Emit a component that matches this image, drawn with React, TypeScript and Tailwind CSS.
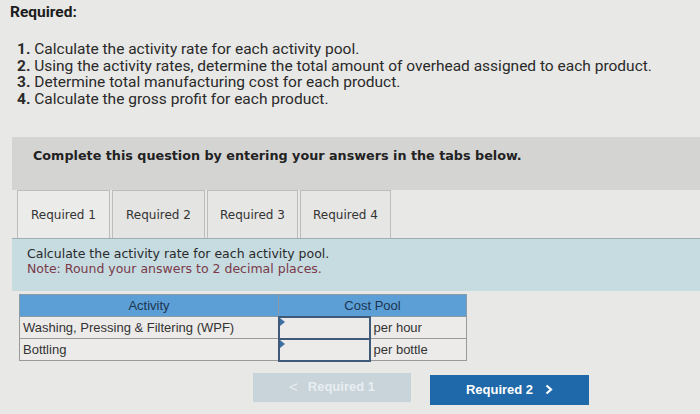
import React from "react";

const tabs = ["Required 1", "Required 2", "Required 3", "Required 4"];

const rows = [
  { activity: "Washing, Pressing & Filtering (WPF)", unit: "per hour" },
  { activity: "Bottling", unit: "per bottle" },
];

export default function App() {
  return (
    <div className="w-[700px] h-[414px] overflow-hidden bg-[#e8e8e6] text-[#222]">
      {/* Required list */}
      <div className="pl-[10px] pt-[2px] font-['Roboto',sans-serif]">
        <h2 className="text-[15.5px] font-bold leading-[20px] text-[#1c1c1c]">Required:</h2>
        <ol className="mt-[19px] pl-[7px] text-[15.5px] leading-[16.5px] text-[#2a2a2a]">
          <li><b>1.</b> Calculate the activity rate for each activity pool.</li>
          <li><b>2.</b> Using the activity rates, determine the total amount of overhead assigned to each product.</li>
          <li><b>3.</b> Determine total manufacturing cost for each product.</li>
          <li><b>4.</b> Calculate the gross profit for each product.</li>
        </ol>
      </div>

      <div className="ml-[12px] mt-[30px] font-['DejaVu_Sans',sans-serif]">
        {/* Instruction band */}
        <div className="h-[53px] bg-[#d4d4d2] pl-[21px] pt-[11px]">
          <p className="text-[12.75px] font-bold leading-[16px] text-[#222]">
            Complete this question by entering your answers in the tabs below.
          </p>
        </div>

        {/* Tabs */}
        <div className="flex gap-[2px] pl-[5px]">
          {tabs.map((t, i) => (
            <div
              key={t}
              className={`h-[48px] border border-[#bdbdbb] border-b-0 flex items-center justify-center text-[12px] text-[#333] ${
                i === 0 ? "w-[93px] bg-[#ebebe9]" : i === 1 ? "w-[93px] bg-[#e4e4e2]" : "w-[91px] bg-[#e6e6e4]"
              }`}
            >
              {t}
            </div>
          ))}
        </div>

        {/* Prompt panel */}
        <div className="h-[53px] bg-[#c6dce1] border-t border-[#9eaeb2] pl-[15px] pt-[7px] text-[12.5px] leading-[15px]">
          <p className="text-[#2a2a2a]">Calculate the activity rate for each activity pool.</p>
          <p className="text-[#7a3a48]">Note: Round your answers to 2 decimal places.</p>
        </div>
      </div>

      {/* Table */}
      <table className="ml-[19px] mt-[3px] border-collapse font-['Liberation_Sans',sans-serif] text-[13px]">
        <thead>
          <tr className="bg-[#5b9fd6] text-[#1d3550]">
            <th className="w-[259px] h-[22px] border border-[#8a9aa6] font-normal">Activity</th>
            <th colSpan={2} className="h-[22px] border border-[#8a9aa6] font-normal">Cost Pool</th>
          </tr>
        </thead>
        <tbody>
          {rows.map((r) => (
            <tr key={r.unit} className="bg-[#ecebe9]">
              <td className="h-[22px] border border-[#9a9a9a] pl-[3px] text-[#333]">{r.activity}</td>
              <td className="w-[91px] h-[22px] border-2 border-[#3f5a78] relative p-0">
                <span className="absolute left-0 top-0 w-0 h-0 border-t-[4px] border-b-[4px] border-l-[5px] border-t-transparent border-b-transparent border-l-[#3d6fa3]" />
              </td>
              <td className="w-[97px] h-[22px] border border-[#9a9a9a] pl-[3px] text-[#333]">{r.unit}</td>
            </tr>
          ))}
        </tbody>
      </table>

      {/* Nav buttons */}
      <div className="flex items-start gap-[19px] ml-[253px] mt-[11px] font-['Liberation_Sans',sans-serif] text-[13px] font-bold">
        <button className="w-[158px] h-[29px] bg-[#c8d3da] text-[#e9eef1] flex items-center justify-center gap-[10px]">
          <span className="text-[15px] font-normal">&lt;</span>
          <span>Required 1</span>
        </button>
        <button className="mt-[2px] w-[159px] h-[30px] bg-[#1f68a9] text-white flex items-center justify-center gap-[12px]">
          <span>Required 2</span>
          <svg width="8" height="11" viewBox="0 0 8 11">
            <path d="M1.5 1.5 L6 5.5 L1.5 9.5" stroke="white" strokeWidth="2.2" fill="none" />
          </svg>
        </button>
      </div>
    </div>
  );
}
